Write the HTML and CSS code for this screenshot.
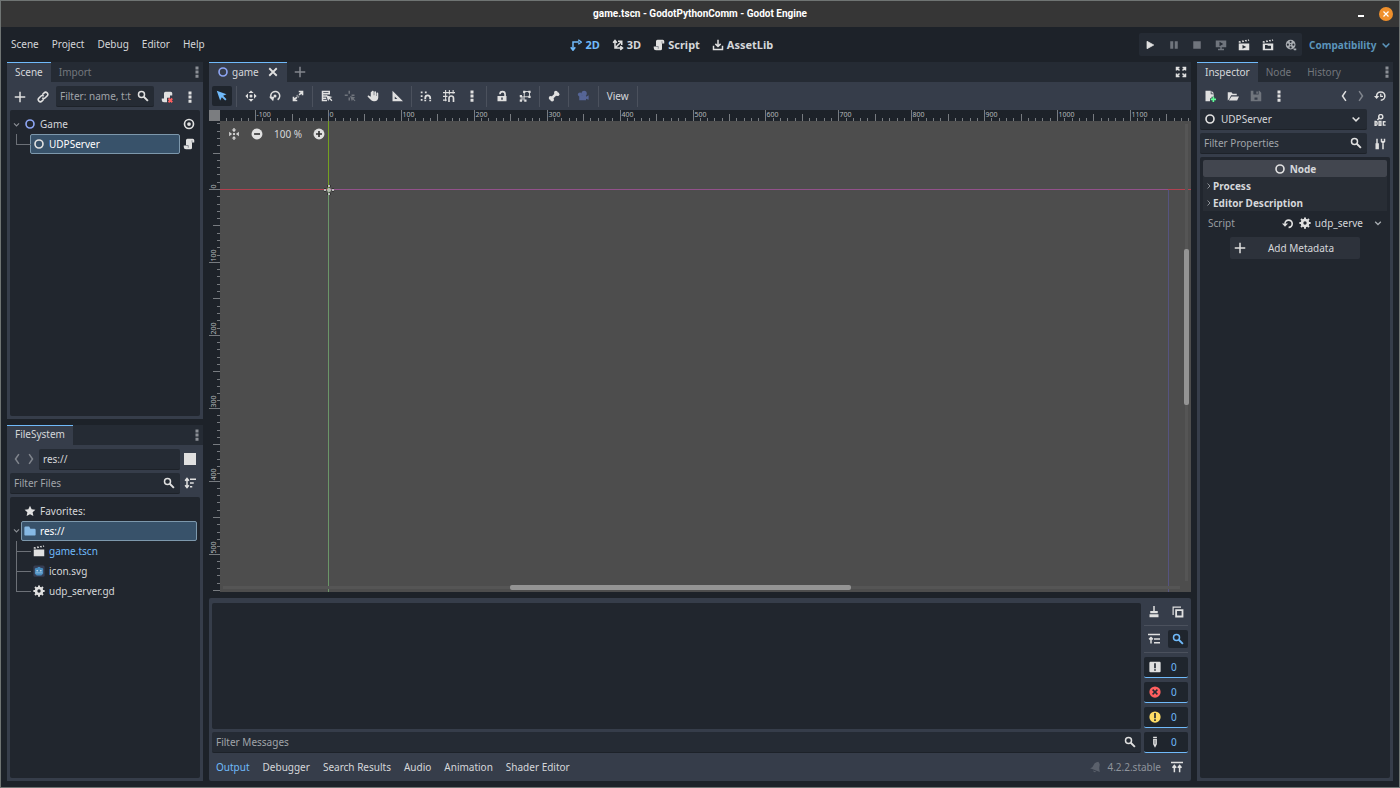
FILE: index.html
```html
<!DOCTYPE html>
<html lang="en">

<head>
    <meta charset="UTF-8">
    <meta name="viewport" content="width=device-width, initial-scale=1.0">
    <title>game.tscn - GodotPythonComm - Godot Engine</title>
    <link rel="stylesheet" href="styles.css">
</head>

<body>
    <!-- icon set, 16x16 grid -->
    <svg class="sprite" aria-hidden="true">
        <symbol id="i-node" viewBox="0 0 16 16"><circle cx="8" cy="8" r="5.3" fill="none" stroke="currentColor" stroke-width="2.2"/></symbol>
        <symbol id="i-2d" viewBox="0 0 16 16"><path d="M4 13V4h8M1 11l3 4 3-4M11 1l4 3-4 3" fill="none" stroke="currentColor" stroke-width="2"/></symbol>
        <symbol id="i-3d" viewBox="0 0 16 16"><path d="M4 3v9h9M4 12l8-8M1.500 5L4 2l2.500 3M11 9.500l3 2.500-3 2.500M8 3h5v5" fill="none" stroke="currentColor" stroke-width="2"/></symbol>
        <symbol id="i-script" viewBox="0 0 16 16"><path d="M6 1a2 2 0 0 0-2 2v7H1v2a3 3 0 0 0 3 3h6a2 2 0 0 0 2-2V6h3V3a2 2 0 0 0-2-2z" fill="currentColor"/><path d="M4 10h3v3M12 6V3" fill="none" stroke="#555b66" stroke-width=".8"/></symbol>
        <symbol id="i-script-x" viewBox="0 0 16 16"><path d="M6 1a2 2 0 0 0-2 2v7H1v2a3 3 0 0 0 3 3h4V9h4V6h3V3a2 2 0 0 0-2-2z" fill="currentColor"/><path d="M10 10l5 5M15 10l-5 5" stroke="#ff5f5f" stroke-width="2.4"/></symbol>
        <symbol id="i-asset" viewBox="0 0 16 16"><path d="M8 1v8M4.500 6.500L8 10l3.500-3.500M2 9v5h12V9" fill="none" stroke="currentColor" stroke-width="2"/></symbol>
        <symbol id="i-play" viewBox="0 0 16 16"><path d="M4 3v10l9-5z" fill="currentColor" stroke="currentColor" stroke-linejoin="round"/></symbol>
        <symbol id="i-pause" viewBox="0 0 16 16"><path d="M3 3h4v10H3zM9 3h4v10H9z" fill="currentColor"/></symbol>
        <symbol id="i-stop" viewBox="0 0 16 16"><path d="M3 3h10v10H3z" fill="currentColor"/></symbol>
        <symbol id="i-remote" viewBox="0 0 16 16"><path d="M1 2h14v9H9v2h3v2H4v-2h3v-2H1z" fill="currentColor"/><path d="M6 3.500v6l5-3z" fill="#252b34"/></symbol>
        <symbol id="i-clapplay" viewBox="0 0 16 16"><path d="M1 6h14v9H1zM1 3l2-.5 1.200 2L1 5zM5 2.200l2-.4 1.200 2-2 .4zM9 1.500l2-.4L12.200 3l-2 .4zM13 .8l1.500-.3.5 2-1 .3z" fill="currentColor"/><path d="M6 8v5l5-2.500z" fill="#252b34"/></symbol>
        <symbol id="i-clapopen" viewBox="0 0 16 16"><path d="M1 6h14v9H1zM1 3l2-.5 1.200 2L1 5zM5 2.200l2-.4 1.200 2-2 .4zM9 1.500l2-.4L12.200 3l-2 .4zM13 .8l1.500-.3.5 2-1 .3z" fill="currentColor"/><path d="M4 8h3l1 1h4v4H4z" fill="#252b34"/></symbol>
        <symbol id="i-clap" viewBox="0 0 16 16"><path d="M1 6h14v9H1zM1 3l2-.5 1.200 2L1 5zM5 2.200l2-.4 1.200 2-2 .4zM9 1.500l2-.4L12.200 3l-2 .4zM13 .8l1.500-.3.5 2-1 .3z" fill="currentColor"/></symbol>
        <symbol id="i-reel" viewBox="0 0 16 16"><circle cx="7.500" cy="7.500" r="6.500" fill="currentColor"/><path d="M11 12.500h4v2.500h-3z" fill="currentColor"/><g fill="#252b34"><circle cx="7.500" cy="3.800" r="1.400"/><circle cx="7.500" cy="11.200" r="1.400"/><circle cx="3.800" cy="7.500" r="1.400"/><circle cx="11.200" cy="7.500" r="1.400"/><circle cx="7.500" cy="7.500" r=".8"/></g></symbol>
        <symbol id="i-down" viewBox="0 0 16 16"><path d="M3.500 6L8 10.500 12.500 6" fill="none" stroke="currentColor" stroke-width="2"/></symbol>
        <symbol id="i-right" viewBox="0 0 16 16"><path d="M5 3l5 5-5 5" fill="none" stroke="currentColor" stroke-width="2"/></symbol>
        <symbol id="i-back" viewBox="0 0 16 16"><path d="M10.500 1.500L6 8l4.500 6.500" fill="none" stroke="currentColor" stroke-width="2"/></symbol>
        <symbol id="i-forward" viewBox="0 0 16 16"><path d="M5.500 1.500L10 8l-4.500 6.500" fill="none" stroke="currentColor" stroke-width="2"/></symbol>
        <symbol id="i-kebab" viewBox="0 0 16 16"><path d="M6 .5h4v4H6zM6 6h4v4H6zM6 11.500h4v4H6z" fill="currentColor"/></symbol>
        <symbol id="i-plus" viewBox="0 0 16 16"><path d="M8 1v14M1 8h14" stroke="currentColor" stroke-width="2"/></symbol>
        <symbol id="i-link" viewBox="0 0 16 16"><path d="M7 5l2.500-2.500a2.800 2.800 0 0 1 4 4L11 9a2.800 2.800 0 0 1-4 0M9 11l-2.500 2.500a2.800 2.800 0 0 1-4-4L5 7a2.800 2.800 0 0 1 4 0" fill="none" stroke="currentColor" stroke-width="2"/></symbol>
        <symbol id="i-search" viewBox="0 0 16 16"><circle cx="6" cy="6" r="4" fill="none" stroke="currentColor" stroke-width="2"/><path d="M9 9l5.500 5.500" stroke="currentColor" stroke-width="2.500"/></symbol>
        <symbol id="i-eye" viewBox="0 0 16 16"><circle cx="8" cy="8" r="6" fill="none" stroke="currentColor" stroke-width="2.2"/><circle cx="8" cy="8" r="2.500" fill="currentColor"/></symbol>
        <symbol id="i-close" viewBox="0 0 16 16"><path d="M3 3l10 10M13 3L3 13" stroke="currentColor" stroke-width="2.400"/></symbol>
        <symbol id="i-select" viewBox="0 0 16 16"><path d="M1 1l4.500 13 2.300-4.500 4.500 4.500 1.700-1.700-4.500-4.500L14 5.500z" fill="currentColor"/></symbol>
        <symbol id="i-move" viewBox="0 0 16 16"><path d="M8 .5l3.500 3.500h-7zM8 15.500L4.500 12h7zM.5 8L4 4.500v7zM15.500 8L12 11.500v-7z" fill="currentColor"/><circle cx="8" cy="8" r="2" fill="currentColor"/></symbol>
        <symbol id="i-rotate" viewBox="0 0 16 16"><path d="M3.500 11.500A6 6 0 1 1 11.500 13" fill="none" stroke="currentColor" stroke-width="2"/><path d="M0 9h7l-1.500 6z" fill="currentColor"/><circle cx="8" cy="8" r="2" fill="currentColor"/></symbol>
        <symbol id="i-scale" viewBox="0 0 16 16"><path d="M9 2h5v5M14 2L9.500 6.500M7 14H2V9M2 14l4.500-4.500" fill="none" stroke="currentColor" stroke-width="2.200"/><path d="M5.500 7.500l1.500-1.500 3 3-1.500 1.500z" fill="currentColor" opacity=".5"/></symbol>
        <symbol id="i-list" viewBox="0 0 16 16"><path d="M1 1h11v5h-2V3H3v1h7v2H3v1h5v2H3v1h4v2H3v1h5v2H1z" fill="currentColor"/><path d="M7 7l2.500 8 1.500-3 3 3 1.200-1.200-3-3 3-1.500z" fill="currentColor"/></symbol>
        <symbol id="i-pivot" viewBox="0 0 16 16"><path d="M7 1v4M7 10v4M1 7h4" stroke="currentColor" stroke-width="2"/><path d="M8 8l2.500 7 1.300-2.500 2.500 2.500 1-1-2.500-2.500L15 10z" fill="currentColor"/><path d="M10 7h4" stroke="currentColor" stroke-width="2"/></symbol>
        <symbol id="i-hand" viewBox="0 0 16 16"><path d="M7.500 1C8.300 1 9 1.500 9 2.300V7h.7V2.800a1.200 1.200 0 0 1 2.400 0V8h.6V4.500a1.100 1.100 0 0 1 2.300 0V10c0 3-2 5-5 5H9c-2 0-3-1-4-2L1 9c-.6-1 .5-2.200 1.700-1.500L5 9V3.500a1 1 0 0 1 1.200-1V1.900C6.300 1.400 6.900 1 7.500 1z" fill="currentColor"/></symbol>
        <symbol id="i-ruler" viewBox="0 0 16 16"><path d="M2 1v14h14zM5 8.500l3.500 3.500H5z" fill="currentColor" fill-rule="evenodd"/></symbol>
        <symbol id="i-snap" viewBox="0 0 16 16"><path d="M7 15v-4.500a3.300 3.300 0 0 1 6.600 0V15" fill="none" stroke="currentColor" stroke-width="2.400"/><path d="M5.500 12h3v1h-3zM12 12h3v1h-3z" fill="#363d4a"/><path d="M1 2h2.400v2.400H1zM6.500 2h2.400v2.400H6.500zM1 7h2.400v2.400H1zM1 12h2.400v2.400H1z" fill="currentColor"/></symbol>
        <symbol id="i-gridsnap" viewBox="0 0 16 16"><path d="M3.500 0v15M8.500 0v6M13.500 0v5M0 3.500h16M0 8.500h6M0 13.500h5" stroke="currentColor" stroke-width="1.400"/><path d="M8 16v-5a3 3 0 0 1 6 0v5" fill="none" stroke="currentColor" stroke-width="2.200"/></symbol>
        <symbol id="i-lock" viewBox="0 0 16 16"><path d="M2 8h9V5.500a2.300 2.300 0 0 0-4.600 0H4.200a4.500 4.500 0 0 1 9 0V8H14v7H2z" fill="currentColor"/><path d="M7 10h2v3H7z" fill="#363d4a"/></symbol>
        <symbol id="i-group" viewBox="0 0 16 16"><path d="M7 2h7v7H7z" fill="none" stroke="currentColor" stroke-width="1.2"/><path d="M2 8h6v6H2z" fill="currentColor" opacity=".55"/><path d="M5.500 1h3v3h-3zM12.500 1h3v3h-3zM12.500 7.500h3v3h-3zM1 6.500h3v3H1zM1 12.500h3v3H1zM7 12.500h3v3H7z" fill="currentColor"/></symbol>
        <symbol id="i-bone" viewBox="0 0 16 16"><path d="M4.500 11.500l7-7" stroke="currentColor" stroke-width="3.500"/><g fill="currentColor"><circle cx="10.500" cy="3.500" r="2.500"/><circle cx="12.700" cy="5.500" r="2.500"/><circle cx="3.500" cy="10.500" r="2.500"/><circle cx="5.500" cy="12.700" r="2.500"/></g></symbol>
        <symbol id="i-camera" viewBox="0 0 16 16"><g fill="currentColor"><circle cx="9.500" cy="4.500" r="3.500"/><circle cx="4" cy="6" r="2.800"/><path d="M3 7h9v6.500H3zM12 9l3.500-2v6L12 11.500z"/></g></symbol>
        <symbol id="i-expand" viewBox="0 0 16 16"><path d="M2 6V2h4M2 2l4 4M10 2h4v4M14 2l-4 4M2 10v4h4M2 14l4-4M14 10v4h-4M14 14l-4-4" fill="none" stroke="currentColor" stroke-width="2"/></symbol>
        <symbol id="i-center" viewBox="0 0 16 16"><path d="M8 5.500L5 2h6zM8 10.500L5 14h6zM5.500 8L1.500 5v6zM10.500 8l4-3v6z" fill="currentColor" opacity=".9"/><path d="M7.200 0h1.600v3H7.200zM7.200 13h1.600v3H7.200z" fill="currentColor"/><circle cx="8" cy="8" r="1.500" fill="currentColor"/></symbol>
        <symbol id="i-minus-c" viewBox="0 0 16 16"><circle cx="8" cy="8" r="7.300" fill="currentColor"/><path d="M4 8h8" stroke="#333" stroke-width="2.200"/></symbol>
        <symbol id="i-plus-c" viewBox="0 0 16 16"><circle cx="8" cy="8" r="7.300" fill="currentColor"/><path d="M4 8h8M8 4v8" stroke="#333" stroke-width="2.200"/></symbol>
        <symbol id="i-sort" viewBox="0 0 16 16"><path d="M4 3v10M1.500 5L4 2l2.500 3M1.500 11L4 14l2.500-3" fill="none" stroke="currentColor" stroke-width="2"/><path d="M8 3h8M8 8h5M8 13h3" stroke="currentColor" stroke-width="2.200"/></symbol>
        <symbol id="i-star" viewBox="0 0 16 16"><path d="M8 1l2.200 4.600 5 .6-3.700 3.500 1 5L8 12.300l-4.500 2.400 1-5L.8 6.200l5-.6z" fill="currentColor"/></symbol>
        <symbol id="i-folder" viewBox="0 0 16 16"><path d="M2 2h5l1.500 3H14a1.500 1.500 0 0 1 1.500 1.500V13a1 1 0 0 1-1 1h-13a1 1 0 0 1-1-1V3.500A1.500 1.500 0 0 1 2 2z" fill="currentColor"/></symbol>
        <symbol id="i-godot" viewBox="0 0 16 16"><rect x=".5" y=".5" width="15" height="15" rx="2" fill="#363d52"/><path d="M2.500 5l1.500-1.500 1.700.8L6.500 2.500h3l.8 1.800 1.700-.8L13.500 5v6.500L11 14H5l-2.500-2.500z" fill="#478cbf"/><path d="M3.500 10h9v1H3.500z" fill="#9cc3e0"/><circle cx="5.500" cy="7.700" r="1" fill="#dfe9f2"/><circle cx="10.500" cy="7.700" r="1" fill="#dfe9f2"/></symbol>
        <symbol id="i-gear" viewBox="0 0 16 16"><circle cx="8" cy="8" r="4" fill="none" stroke="currentColor" stroke-width="3.500"/><path d="M8 .5v3M8 12.500v3M.5 8h3M12.500 8h3M2.700 2.700l2.100 2.100M11.200 11.200l2.100 2.100M13.300 2.700l-2.100 2.100M4.800 11.200l-2.100 2.100" stroke="currentColor" stroke-width="2.600"/></symbol>
        <symbol id="i-newres" viewBox="0 0 16 16"><path d="M2 1h7v4.500h4V9h-3v2H8v4H2zM10 1l3.500 3.500H10z" fill="currentColor"/><path d="M12.500 9v7M9 12.500h7" stroke="#5fff97" stroke-width="2.200"/></symbol>
        <symbol id="i-open" viewBox="0 0 16 16"><path d="M1 14V3h5l1.500 2H13v2H5.500L3 12zM6 8.500h10L13.500 14h-11z" fill="currentColor"/></symbol>
        <symbol id="i-save" viewBox="0 0 16 16"><path d="M1 1h11.500L15 3.500V15H1zM4.500 1v5h7V1zM6 10v3h4v-3z" fill="currentColor" fill-rule="evenodd"/><path d="M8.500 2h2v3h-2z" fill="currentColor"/></symbol>
        <symbol id="i-history" viewBox="0 0 16 16"><path d="M3.500 8A5.500 5.500 0 1 1 9 13.500" fill="none" stroke="currentColor" stroke-width="2"/><path d="M0 8h7l-3.500 4z" fill="currentColor"/><path d="M9 5v3.500h3" fill="none" stroke="currentColor" stroke-width="1.600"/></symbol>
        <symbol id="i-revert" viewBox="0 0 16 16"><path d="M4 9a4.800 4.800 0 1 1 4.800 4.800" fill="none" stroke="currentColor" stroke-width="2.2"/><path d="M0 8.500h8l-4 4.500z" fill="currentColor"/></symbol>
        <symbol id="i-doc" viewBox="0 0 16 16"><circle cx="9" cy="3.500" r="2.700" fill="none" stroke="currentColor" stroke-width="2"/><path d="M7 5.500L4.500 8" stroke="currentColor" stroke-width="2"/><path d="M1.500 10v5h1.200a1.500 1.500 0 0 0 1.400-1.500v-2a1.500 1.500 0 0 0-1.400-1.500zM6.800 10h2.400v5H6.800zM15.500 10.300h-3v4.500h3" fill="none" stroke="currentColor" stroke-width="1.900"/></symbol>
        <symbol id="i-tools" viewBox="0 0 16 16"><path d="M4 1v6M3 8h2.500v6H3zM12 7v8" fill="currentColor" stroke="currentColor" stroke-width="2"/><path d="M9 1v4l2 2h2l2-2V1h-2v3h-2V1z" fill="currentColor"/></symbol>
        <symbol id="i-broom" viewBox="0 0 16 16"><path d="M7 0h2v6.500h4v3H3v-3h4zM2 11h12v4H2z" fill="currentColor"/></symbol>
        <symbol id="i-copy" viewBox="0 0 16 16"><path d="M1.500 12V1.500H12" fill="none" stroke="currentColor" stroke-width="1.600"/><path d="M5.500 5.500h8.500v8.500H5.500z" fill="none" stroke="currentColor" stroke-width="2.400"/></symbol>
        <symbol id="i-collapse" viewBox="0 0 16 16"><path d="M0 2h16M8 8h8M8 13h8M4 14V6M1.500 8.500L4 6l2.500 2.500" fill="none" stroke="currentColor" stroke-width="2"/></symbol>
        <symbol id="i-msg" viewBox="0 0 16 16"><rect x=".5" y="1" width="15" height="14" rx="1.500" fill="currentColor"/><path d="M8 3v6.500M8 11v2" stroke="#252b34" stroke-width="2.200"/></symbol>
        <symbol id="i-error" viewBox="0 0 16 16"><circle cx="8" cy="8" r="7.500" fill="#ff5f5f"/><path d="M4.800 4.800l6.400 6.400M11.200 4.800l-6.400 6.400" stroke="#252b34" stroke-width="2"/></symbol>
        <symbol id="i-warn" viewBox="0 0 16 16"><circle cx="8" cy="8" r="7.500" fill="#ffdd65"/><path d="M8 2.500v7M8 11v2.300" stroke="#252b34" stroke-width="2.200"/></symbol>
        <symbol id="i-pencil" viewBox="0 0 16 16"><path d="M5.500 1h5v2h-5zM5.500 4h5v7L8 15.500 5.500 11z" fill="currentColor"/><path d="M8 5v6" stroke="#252b34" stroke-width=".8"/></symbol>
        <symbol id="i-bell" viewBox="0 0 16 16"><path d="M10 1.500l2.500-.5 1.500 2.500c.8 2-.2 3.500-.3 5.500-.1 2 .3 3.500.8 5.500L1.500 9.500C4 9 5 7.500 6 5.500 7 3.500 8 2 10 1.500zM5.500 12.800l4 1.300c-.8 1.700-3.800 1-4-1.300z" fill="currentColor"/></symbol>
        <symbol id="i-raise" viewBox="0 0 16 16"><path d="M0 2h16M4.500 15V7M11.500 15V7M2 9l2.500-3L7 9M9 9l2.500-3L14 9" fill="none" stroke="currentColor" stroke-width="2"/></symbol>
    </svg>

    <div class="window">
        <header class="titlebar">
            <h1>game.tscn - GodotPythonComm - Godot Engine</h1>
            <div class="win-buttons">
                <button class="win-min" aria-label="Minimize"></button>
                <button class="win-close" aria-label="Close"><svg class="tiny"><use href="#i-close"/></svg></button>
            </div>
        </header>

        <div class="menubar">
            <nav class="menus">
                <button>Scene</button>
                <button>Project</button>
                <button>Debug</button>
                <button>Editor</button>
                <button>Help</button>
            </nav>
            <div class="screens">
                <button class="active"><svg class="icon"><use href="#i-2d"/></svg>2D</button>
                <button><svg class="icon"><use href="#i-3d"/></svg>3D</button>
                <button><svg class="icon"><use href="#i-script"/></svg>Script</button>
                <button><svg class="icon"><use href="#i-asset"/></svg>AssetLib</button>
            </div>
            <div class="run">
                <div class="runbar">
                    <button class="tool" aria-label="Play"><svg class="icon"><use href="#i-play"/></svg></button>
                    <button class="tool dim" aria-label="Pause"><svg class="icon"><use href="#i-pause"/></svg></button>
                    <button class="tool dim" aria-label="Stop"><svg class="icon"><use href="#i-stop"/></svg></button>
                    <button class="tool dim" aria-label="Remote debug"><svg class="icon"><use href="#i-remote"/></svg></button>
                    <button class="tool" aria-label="Play scene"><svg class="icon"><use href="#i-clapplay"/></svg></button>
                    <button class="tool" aria-label="Play custom scene"><svg class="icon"><use href="#i-clapopen"/></svg></button>
                    <button class="tool soft" aria-label="Movie maker"><svg class="icon"><use href="#i-reel"/></svg></button>
                </div>
                <div class="renderer">
                    <select aria-label="Renderer">
                        <option>Compatibility</option>
                    </select>
                    <svg class="icon"><use href="#i-down"/></svg>
                </div>
            </div>
        </div>

        <main class="layout">
            <div class="column">
                <section class="dock">
                    <div class="tabs">
                        <button class="tab active">Scene</button>
                        <button class="tab">Import</button>
                        <button class="more" aria-label="Dock options"><svg class="icon"><use href="#i-kebab"/></svg></button>
                    </div>
                    <div class="dock-body">
                        <div class="row">
                            <button class="tool" aria-label="Add node"><svg class="icon"><use href="#i-plus"/></svg></button>
                            <button class="tool" aria-label="Instantiate scene"><svg class="icon"><use href="#i-link"/></svg></button>
                            <div class="field">
                                <input type="text" placeholder="Filter: name, t:t" aria-label="Filter nodes">
                                <svg class="icon"><use href="#i-search"/></svg>
                            </div>
                            <button class="tool" aria-label="Detach script"><svg class="icon"><use href="#i-script-x"/></svg></button>
                            <button class="tool" aria-label="More"><svg class="icon"><use href="#i-kebab"/></svg></button>
                        </div>
                        <ul class="tree">
                            <li>
                                <div class="item">
                                    <svg class="arrow"><use href="#i-down"/></svg>
                                    <button class="name"><svg class="icon blue"><use href="#i-node"/></svg>Game</button>
                                    <button class="side" aria-label="Toggle visibility"><svg class="icon"><use href="#i-eye"/></svg></button>
                                </div>
                                <ul class="branch">
                                    <li class="item">
                                        <button class="name selected"><svg class="icon"><use href="#i-node"/></svg>UDPServer</button>
                                        <button class="side" aria-label="Open script"><svg class="icon"><use href="#i-script"/></svg></button>
                                    </li>
                                </ul>
                            </li>
                        </ul>
                    </div>
                </section>

                <section class="dock">
                    <div class="tabs">
                        <button class="tab active">FileSystem</button>
                        <button class="more" aria-label="Dock options"><svg class="icon"><use href="#i-kebab"/></svg></button>
                    </div>
                    <div class="dock-body">
                        <div class="row tight">
                            <div class="nav start">
                                <button aria-label="Back"><svg class="icon"><use href="#i-back"/></svg></button>
                                <button aria-label="Forward"><svg class="icon"><use href="#i-forward"/></svg></button>
                            </div>
                            <div class="field">
                                <input type="text" value="res://" aria-label="Path">
                            </div>
                            <button class="tool" aria-label="Split mode"><span class="split"></span></button>
                        </div>
                        <div class="row tight">
                            <div class="field">
                                <input type="text" placeholder="Filter Files" aria-label="Filter files">
                                <svg class="icon"><use href="#i-search"/></svg>
                            </div>
                            <button class="tool" aria-label="Sort files"><svg class="icon"><use href="#i-sort"/></svg></button>
                        </div>
                        <ul class="tree">
                            <li class="item">
                                <span class="arrow"></span>
                                <button class="name"><svg class="icon"><use href="#i-star"/></svg>Favorites:</button>
                            </li>
                            <li>
                                <div class="item">
                                    <svg class="arrow"><use href="#i-down"/></svg>
                                    <button class="name selected"><svg class="icon folder"><use href="#i-folder"/></svg>res://</button>
                                </div>
                                <ul class="branch">
                                    <li class="item"><button class="name open"><svg class="icon"><use href="#i-clap"/></svg>game.tscn</button></li>
                                    <li class="item"><button class="name"><svg class="icon"><use href="#i-godot"/></svg>icon.svg</button></li>
                                    <li class="item"><button class="name"><svg class="icon"><use href="#i-gear"/></svg>udp_server.gd</button></li>
                                </ul>
                            </li>
                        </ul>
                    </div>
                </section>
            </div>

            <div class="column center">
                <section class="workspace">
                    <div class="tabs">
                        <button class="tab scene active"><svg class="icon blue"><use href="#i-node"/></svg>game<svg class="icon"><use href="#i-close"/></svg></button>
                        <button class="add" aria-label="New scene"><svg class="icon"><use href="#i-plus"/></svg></button>
                        <button class="more expand" aria-label="Distraction free mode"><svg class="icon"><use href="#i-expand"/></svg></button>
                    </div>
                    <div class="toolbar">
                        <div class="tools">
                            <button class="tool pressed" aria-label="Select"><svg class="icon"><use href="#i-select"/></svg></button>
                            <span class="sep"></span>
                            <button class="tool" aria-label="Move"><svg class="icon"><use href="#i-move"/></svg></button>
                            <button class="tool" aria-label="Rotate"><svg class="icon"><use href="#i-rotate"/></svg></button>
                            <button class="tool" aria-label="Scale"><svg class="icon"><use href="#i-scale"/></svg></button>
                            <span class="sep"></span>
                            <button class="tool" aria-label="List select"><svg class="icon"><use href="#i-list"/></svg></button>
                            <button class="tool dim" aria-label="Pivot"><svg class="icon"><use href="#i-pivot"/></svg></button>
                            <button class="tool" aria-label="Pan"><svg class="icon"><use href="#i-hand"/></svg></button>
                            <button class="tool" aria-label="Ruler"><svg class="icon"><use href="#i-ruler"/></svg></button>
                            <span class="sep"></span>
                            <button class="tool" aria-label="Smart snap"><svg class="icon"><use href="#i-snap"/></svg></button>
                            <button class="tool" aria-label="Grid snap"><svg class="icon"><use href="#i-gridsnap"/></svg></button>
                            <button class="tool" aria-label="Snap options"><svg class="icon"><use href="#i-kebab"/></svg></button>
                            <span class="sep"></span>
                            <button class="tool" aria-label="Lock"><svg class="icon"><use href="#i-lock"/></svg></button>
                            <button class="tool" aria-label="Group"><svg class="icon"><use href="#i-group"/></svg></button>
                            <span class="sep"></span>
                            <button class="tool" aria-label="Skeleton"><svg class="icon"><use href="#i-bone"/></svg></button>
                            <span class="sep"></span>
                            <button class="tool camera" aria-label="Override camera"><svg class="icon"><use href="#i-camera"/></svg></button>
                            <span class="sep"></span>
                            <button class="view">View</button>
                            <span class="sep"></span>
                        </div>
                    </div>
                    <div class="viewport">
                        <div class="corner"></div>
                        <svg class="ruler" id="ruler-x"></svg>
                        <svg class="ruler" id="ruler-y"></svg>
                        <div class="canvas">
                            <div class="axis-x"></div>
                            <div class="axis-x inside"></div>
                            <div class="axis-y"></div>
                            <div class="axis-y inside"></div>
                            <div class="frame"></div>
                            <svg class="origin"><path d="M6 1v2M6 9v2M1 6h2M9 6h2" stroke="#333" stroke-width="4"/><path d="M6 1v2M6 9v2M1 6h2M9 6h2" stroke="#bbb" stroke-width="2"/><circle cx="6" cy="6" r="2" fill="#b5bfae"/></svg>
                            <div class="zoom">
                                <button aria-label="Center view"><svg class="icon"><use href="#i-center"/></svg></button>
                                <button aria-label="Zoom out"><svg class="icon"><use href="#i-minus-c"/></svg></button>
                                <button class="level">100 %</button>
                                <button aria-label="Zoom in"><svg class="icon"><use href="#i-plus-c"/></svg></button>
                            </div>
                            <div class="scroll-x"><span></span></div>
                            <div class="scroll-y"><span></span></div>
                        </div>
                    </div>
                </section>

                <section class="bottom">
                    <div class="log">
                        <div class="log-main">
                            <div class="output"></div>
                            <div class="field">
                                <input type="text" placeholder="Filter Messages" aria-label="Filter messages">
                                <svg class="icon"><use href="#i-search"/></svg>
                            </div>
                        </div>
                        <div class="log-side">
                            <div class="pair">
                                <button class="tool" aria-label="Clear output"><svg class="icon"><use href="#i-broom"/></svg></button>
                                <button class="tool" aria-label="Copy"><svg class="icon"><use href="#i-copy"/></svg></button>
                            </div>
                            <hr>
                            <div class="pair">
                                <button class="tool" aria-label="Collapse duplicates"><svg class="icon"><use href="#i-collapse"/></svg></button>
                                <button class="tool pressed" aria-label="Show search"><svg class="icon"><use href="#i-search"/></svg></button>
                            </div>
                            <hr>
                            <button class="count" aria-label="Messages"><svg class="icon"><use href="#i-msg"/></svg>0</button>
                            <button class="count" aria-label="Errors"><svg class="icon"><use href="#i-error"/></svg>0</button>
                            <button class="count" aria-label="Warnings"><svg class="icon"><use href="#i-warn"/></svg>0</button>
                            <button class="count" aria-label="Editor messages"><svg class="icon"><use href="#i-pencil"/></svg>0</button>
                        </div>
                    </div>
                    <div class="bottom-tabs">
                        <button class="active">Output</button>
                        <button>Debugger</button>
                        <button>Search Results</button>
                        <button>Audio</button>
                        <button>Animation</button>
                        <button>Shader Editor</button>
                        <div class="status">
                            <svg class="icon bell"><use href="#i-bell"/></svg>
                            <a href="#">4.2.2.stable</a>
                            <button class="tool" aria-label="Expand bottom panel"><svg class="icon"><use href="#i-raise"/></svg></button>
                        </div>
                    </div>
                </section>
            </div>

            <div class="column">
                <section class="dock">
                    <div class="tabs">
                        <button class="tab active">Inspector</button>
                        <button class="tab">Node</button>
                        <button class="tab">History</button>
                        <button class="more" aria-label="Dock options"><svg class="icon"><use href="#i-kebab"/></svg></button>
                    </div>
                    <div class="dock-body inspector">
                        <div class="row">
                            <button class="tool" aria-label="New resource"><svg class="icon"><use href="#i-newres"/></svg></button>
                            <button class="tool" aria-label="Load resource"><svg class="icon"><use href="#i-open"/></svg></button>
                            <button class="tool dim" aria-label="Save resource"><svg class="icon"><use href="#i-save"/></svg></button>
                            <button class="tool" aria-label="Resource options"><svg class="icon"><use href="#i-kebab"/></svg></button>
                            <div class="nav end">
                                <button class="bright" aria-label="Previous object"><svg class="icon"><use href="#i-back"/></svg></button>
                                <button aria-label="Next object"><svg class="icon"><use href="#i-forward"/></svg></button>
                            </div>
                            <button class="tool" aria-label="Object history"><svg class="icon"><use href="#i-history"/></svg></button>
                        </div>
                        <div class="row">
                            <div class="field object">
                                <svg class="icon"><use href="#i-node"/></svg>
                                <select aria-label="Edited object">
                                    <option>UDPServer</option>
                                </select>
                                <svg class="icon"><use href="#i-down"/></svg>
                            </div>
                            <button class="tool" aria-label="Open documentation"><svg class="icon"><use href="#i-doc"/></svg></button>
                        </div>
                        <div class="row">
                            <div class="field">
                                <input type="text" placeholder="Filter Properties" aria-label="Filter properties">
                                <svg class="icon"><use href="#i-search"/></svg>
                            </div>
                            <button class="tool" aria-label="Manage properties"><svg class="icon"><use href="#i-tools"/></svg></button>
                        </div>
                        <div class="props">
                            <h2><svg class="icon"><use href="#i-node"/></svg>Node</h2>
                            <button class="section"><svg class="caret"><use href="#i-right"/></svg>Process</button>
                            <button class="section"><svg class="caret"><use href="#i-right"/></svg>Editor Description</button>
                            <div class="prop">
                                <span class="prop-name">Script</span>
                                <button aria-label="Revert"><svg class="icon"><use href="#i-revert"/></svg></button>
                                <button class="value"><svg class="icon"><use href="#i-gear"/></svg>udp_serve</button>
                                <button aria-label="Script options"><svg class="icon soft small"><use href="#i-down"/></svg></button>
                            </div>
                            <button class="metadata"><svg class="icon"><use href="#i-plus"/></svg><span>Add Metadata</span></button>
                        </div>
                    </div>
                </section>
            </div>
        </main>
    </div>

    <script src="rulers.js"></script>
</body>

</html>
```
FILE: styles.css
```css
* {
    box-sizing: border-box;
}

body {
    margin: 0;
    background: #1d2229;
    color: #d5d7da;
    font-family: "Noto Sans", sans-serif;
    font-size: 10px;
    line-height: 14px;
}

button,
input,
select {
    margin: 0;
    padding: 0;
    border: 0;
    background: none;
    color: inherit;
    font: inherit;
}

button {
    display: flex;
    align-items: center;
    justify-content: center;
    flex-shrink: 0;
    white-space: nowrap;
    cursor: pointer;
}

select {
    appearance: none;
    cursor: pointer;
}

ul {
    margin: 0;
    padding: 0;
    list-style: none;
}

.sprite {
    display: none;
}

.icon {
    width: 12px;
    height: 12px;
    flex-shrink: 0;
    display: block;
    color: #e0e0e0;
}

.icon.blue {
    color: #8da5f3;
}

.icon.folder {
    color: #86b9e4;
}

.window {
    display: flex;
    flex-direction: column;
    height: 100vh;
    border: 1px solid #6f7473;
}

/* title bar */
.titlebar {
    display: grid;
    grid-template-columns: 1fr auto 1fr;
    align-items: center;
    height: 26px;
    background: #363636;
    flex-shrink: 0;
}

.titlebar h1 {
    grid-column: 2;
    margin: 0;
    color: #fff;
    font-family: Roboto, "Noto Sans", sans-serif;
    font-size: 10px;
    font-weight: 700;
}

.win-buttons {
    display: flex;
    align-items: center;
    justify-content: flex-end;
    gap: 15px;
    padding-right: 6px;
}

.win-min {
    width: 6px;
    height: 6px;
    border-bottom: 2px solid #fff;
}

.win-close {
    width: 14px;
    height: 14px;
    border-radius: 50%;
    background: #f0902c;
}

.tiny {
    width: 8px;
    height: 8px;
    color: #fff;
}

/* menu bar */
.menubar {
    display: flex;
    align-items: center;
    justify-content: space-between;
    height: 35px;
    padding: 0 7px 0 10px;
    flex-shrink: 0;
}

.menus {
    display: flex;
    gap: 13px;
    padding-bottom: 2px;
}

.screens {
    display: flex;
    gap: 12px;
    font-size: 11px;
    font-weight: 700;
}

.screens button {
    gap: 3px;
}

.active,
.screens .active .icon {
    color: #70bafa;
}

.run {
    display: flex;
    align-items: center;
    gap: 7px;
}

.runbar {
    display: flex;
    align-items: center;
    justify-content: space-between;
    width: 163px;
    height: 23px;
    padding: 0 1px;
    border-radius: 2px;
    background: #252b34;
}

.renderer {
    display: flex;
    align-items: center;
    gap: 3px;
    color: #5b94ba;
    font-weight: 700;
}

.renderer .icon {
    color: #5b94ba;
}

.tool {
    width: 20px;
    height: 20px;
    border-radius: 2px;
}

.dim .icon {
    color: #70757d;
}

.soft,
.soft .icon {
    color: #a9adb2;
}

.icon.small {
    width: 10px;
    height: 10px;
}

.pressed {
    background: #1f252d;
}

.pressed .icon {
    color: #70bafa;
}

/* main columns */
.layout {
    display: grid;
    grid-template-columns: 196px 1fr 196px;
    gap: 6px;
    flex: 1;
    min-height: 0;
    padding: 0 6px 6px;
}

.column {
    display: flex;
    flex-direction: column;
    gap: 6px;
    min-width: 0;
    min-height: 0;
}

.dock {
    display: flex;
    flex-direction: column;
    flex: 1;
    min-height: 0;
    background: #363d4a;
}

.tabs {
    display: flex;
    align-items: stretch;
    height: 20px;
    background: #252b34;
    flex-shrink: 0;
}

.tab {
    padding: 0 8px 2px;
    border-top: 1px solid transparent;
    color: #73777d;
}

.tab.active {
    border-top-color: #70bafa;
    background: #363d4a;
    color: #d5d7da;
}

.tab.scene {
    gap: 3px;
}

.tab.scene .icon:last-child {
    margin-left: 5px;
}

.more {
    margin-left: auto;
}

.more .icon {
    color: #8b8f95;
}

.more.expand {
    padding-right: 4px;
}

.more.expand .icon {
    color: #e0e0e0;
}

.add {
    padding: 0 7px;
}

.add .icon {
    color: #83878d;
}

.dock-body {
    display: flex;
    flex-direction: column;
    flex: 1;
    gap: 3px;
    min-height: 0;
    padding: 4px 3px 3px;
}

.row {
    display: flex;
    align-items: center;
    gap: 3px;
    height: 21px;
    flex-shrink: 0;
}

.row.tight {
    gap: 0;
}

.field {
    display: flex;
    align-items: center;
    flex: 1;
    min-width: 0;
    height: 21px;
    padding: 0 5px 0 4px;
    border-bottom: 1px solid #1d2229;
    border-radius: 2px;
    background: #252b34;
}

.field input,
.field select {
    flex: 1;
    width: 0;
    min-width: 0;
}

.field input::placeholder {
    color: #a0a4a9;
    opacity: 1;
}

.nav {
    display: flex;
    gap: 2px;
}

.nav .icon {
    color: #80858d;
}

.nav .bright .icon {
    color: #e0e0e0;
}

.nav.start {
    padding: 0 2px 0 1px;
}

.nav.end {
    margin-left: auto;
    gap: 5px;
}

.split {
    width: 12px;
    height: 12px;
    background: #e0e0e0;
}

/* trees */
.tree {
    flex: 1;
    padding: 4px 3px 3px 2px;
    border-radius: 2px;
    background: #21262e;
}

.item {
    display: flex;
    align-items: center;
    height: 20px;
}

.arrow {
    width: 9px;
    height: 9px;
    color: #8b8f95;
}

.name {
    flex: 1;
    justify-content: flex-start;
    gap: 4px;
    height: 20px;
    padding: 0 2px;
    border: 1px solid transparent;
}

.name.selected {
    border-color: #7d98ac;
    border-radius: 2px;
    background: #38526a;
    color: #fff;
}

.name.open {
    color: #70bafa;
}

.side {
    width: 17px;
}

.branch .item {
    position: relative;
    padding-left: 18px;
}

.branch .item::before {
    content: "";
    position: absolute;
    left: 4px;
    top: 0;
    width: 14px;
    height: 10px;
    border-left: 1px solid #6c7077;
    border-bottom: 1px solid #6c7077;
}

.branch .item:not(:last-child)::after {
    content: "";
    position: absolute;
    left: 4px;
    top: 10px;
    height: 10px;
    border-left: 1px solid #6c7077;
}

/* 2D editor */
.workspace {
    display: flex;
    flex-direction: column;
    flex: 1;
    min-height: 0;
}

.toolbar {
    height: 28px;
    padding: 4px 3px;
    background: #363d4a;
    flex-shrink: 0;
}

.tools {
    display: flex;
    align-items: center;
    justify-content: space-between;
    width: 427px;
    height: 20px;
}

.sep {
    width: 1px;
    height: 21px;
    margin: 0 1px;
    background: #4b515d;
}

.camera .icon {
    color: #566596;
}

.view {
    padding: 0 4px;
}

.viewport {
    display: grid;
    grid-template: 11px 1fr / 11px 1fr;
    flex: 1;
    min-height: 0;
    background: #1d2229;
}

.corner {
    background: #7b7d80;
}

.ruler {
    display: block;
    width: 100%;
    height: 100%;
    overflow: hidden;
    min-height: 0;
}

.ruler path {
    stroke: #777b80;
    fill: none;
}

.ruler text {
    fill: #b4b7bb;
    font-size: 7px;
}

.canvas {
    position: relative;
    overflow: hidden;
    background: #4d4d4d;
}

.axis-x,
.axis-y,
.frame,
.origin,
.zoom,
.scroll-x,
.scroll-y {
    position: absolute;
}

.axis-x {
    left: 0;
    right: 0;
    top: 68px;
    height: 1px;
    background: #b0414f;
}

.axis-x.inside {
    left: 109px;
    right: auto;
    width: 839px;
    background: #92518b;
}

.axis-y {
    left: 108px;
    top: 0;
    bottom: 0;
    width: 1px;
    background: #74a11f;
}

.axis-y.inside {
    top: 69px;
    background: #6b9668;
}

.frame {
    left: 948px;
    top: 69px;
    bottom: 0;
    width: 1px;
    background: #565480;
}

.origin {
    left: 103px;
    top: 63px;
    width: 12px;
    height: 12px;
}

.zoom {
    display: flex;
    align-items: center;
    gap: 11px;
    left: 8px;
    top: 5px;
    height: 16px;
}

.scroll-x {
    left: 3px;
    right: 11px;
    bottom: 3px;
    height: 3px;
    background: #555;
}

.scroll-x span {
    position: absolute;
    left: 30%;
    top: -1px;
    width: 341px;
    height: 5px;
    border-radius: 2px;
    background: #949494;
}

.scroll-y {
    right: 3px;
    top: 3px;
    bottom: 11px;
    width: 3px;
    background: #555;
}

.scroll-y span {
    position: absolute;
    left: -1px;
    top: 125px;
    width: 5px;
    height: 156px;
    border-radius: 2px;
    background: #949494;
}

/* bottom panel */
.bottom {
    padding: 5px 3px 0;
    background: #363d4a;
    border-radius: 2px;
    flex-shrink: 0;
}

.log {
    display: grid;
    grid-template-columns: 1fr 44px;
    gap: 3px;
}

.log-main {
    display: flex;
    flex-direction: column;
    gap: 3px;
}

.log-main .field {
    flex: none;
}

.output {
    flex: 1;
    border-radius: 2px;
    background: #21262e;
}

.log-side {
    display: flex;
    flex-direction: column;
    gap: 4px;
}

.log-side hr {
    width: 100%;
    height: 1px;
    margin: 0;
    border: 0;
    background: #4b515d;
}

.pair {
    display: flex;
    justify-content: space-between;
    height: 18px;
}

.pair .tool {
    height: 18px;
}

.count {
    justify-content: flex-start;
    gap: 10px;
    height: 21px;
    padding: 0 5px;
    border-bottom: 1px solid #70bafa;
    border-radius: 2px;
    background: #1f252d;
    color: #70bafa;
}

.bottom-tabs {
    display: flex;
    align-items: center;
    gap: 13px;
    height: 28px;
    padding: 0 1px 0 4px;
}

.status {
    display: flex;
    align-items: center;
    gap: 6px;
    margin-left: auto;
}

.status a {
    color: #8f949b;
    text-decoration: none;
}

.status .bell {
    color: #5a606b;
}

/* inspector */
.inspector {
    padding-top: 3px;
}

.object .icon {
    margin-right: 5px;
}

.object .icon:last-child {
    margin-right: 0;
}

.props {
    flex: 1;
    padding: 3px;
    border-radius: 2px;
    background: #21262e;
}

.props h2 {
    display: flex;
    align-items: center;
    justify-content: center;
    gap: 4px;
    height: 17px;
    margin: 0;
    border-radius: 2px;
    background: #42464f;
    font-size: 10px;
    font-weight: 700;
}

.section {
    justify-content: flex-start;
    width: 100%;
    height: 17px;
    padding-left: 2px;
    background: #282d35;
    font-weight: 700;
}

.caret {
    width: 8px;
    height: 8px;
    color: #8b8f95;
}

.prop {
    display: flex;
    align-items: center;
    gap: 5px;
    height: 23px;
    padding: 0 4px 0 5px;
}

.prop-name {
    flex: 1;
    color: #9a9da2;
}

.value {
    gap: 4px;
    padding-right: 5px;
}

.metadata {
    width: 130px;
    height: 22px;
    margin: 3px auto;
    padding: 0 4px;
    border-radius: 2px;
    background: #2d323b;
}

.metadata span {
    flex: 1;
}
```
FILE: rulers.js
```js
const STEP = 72.9;
const SVG = 'http://www.w3.org/2000/svg';

// one major tick per 100 units, ten subdivisions each
function drawRuler(id, origin, vertical) {
    const svg = document.getElementById(id);
    const box = svg.getBoundingClientRect();
    const length = vertical ? box.height : box.width;
    const first = Math.ceil(-origin / STEP * 10);
    const last = Math.floor((length - origin) / STEP * 10);
    let ticks = '';

    for (let n = first; n <= last; n++) {
        const pos = Math.round(origin + n * STEP / 10) + 0.5;
        const start = n % 10 === 0 ? 0 : n % 5 === 0 ? 4 : 8;
        ticks += vertical ? `M${start} ${pos}H11` : `M${pos} ${start}V11`;

        if (n % 10 === 0) {
            const label = document.createElementNS(SVG, 'text');
            label.textContent = n * 10;
            label.setAttribute('transform', vertical ? `translate(7 ${pos - 1}) rotate(-90)` : `translate(${pos + 1} 7)`);
            svg.appendChild(label);
        }
    }

    const path = document.createElementNS(SVG, 'path');
    path.setAttribute('d', ticks);
    svg.prepend(path);
}

drawRuler('ruler-x', 108, false);
drawRuler('ruler-y', 68, true);
```
